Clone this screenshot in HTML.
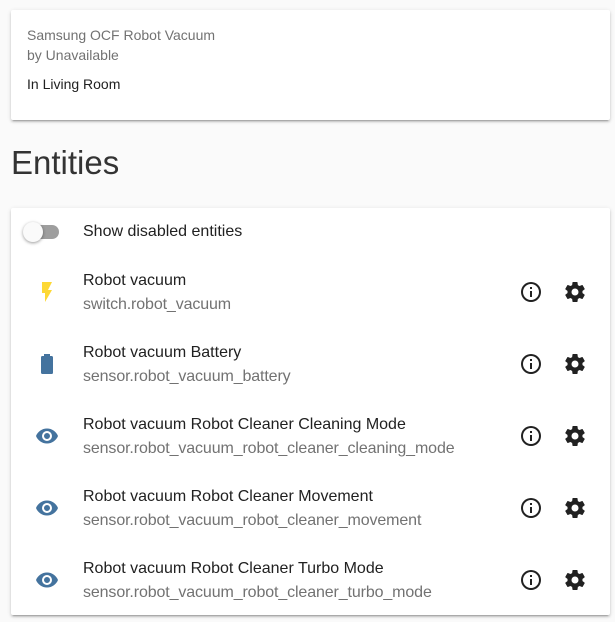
<!DOCTYPE html><html><head><style>
body{margin:0;background:#fafafa;font-family:"Liberation Sans",sans-serif;width:615px;height:622px;overflow:hidden;position:relative}
.card{position:absolute;left:11px;width:599px;background:#fff;border-radius:2px;box-shadow:0 2px 2px rgba(0,0,0,.14),0 1px 5px rgba(0,0,0,.12),0 3px 1px -2px rgba(0,0,0,.2)}
.t{position:absolute;white-space:nowrap}
.row{position:absolute;left:0;width:599px;height:72px}
.row .ic{position:absolute;left:24px;top:24px}
.row .n{position:absolute;left:72px;top:16px;font-size:16px;color:#212121}
.row .s{position:absolute;left:72px;top:40px;font-size:16px;color:#727272;letter-spacing:-0.12px}
.row .a{position:absolute;left:508px;top:24px}
.row .b{position:absolute;left:552px;top:24px}
</style></head><body>
<div class="card" style="top:10px;height:110px">
<div class="t" style="left:16px;top:17px;font-size:14px;color:#727272">Samsung OCF Robot Vacuum</div>
<div class="t" style="left:16px;top:37px;font-size:14px;color:#727272">by Unavailable</div>
<div class="t" style="left:16px;top:66px;font-size:14px;color:#212121">In Living Room</div>
</div>
<div class="t" style="left:11px;top:144px;font-size:33px;color:#333">Entities</div>
<div class="card" style="top:208px;height:407px">
<div style="position:absolute;left:14px;top:17px;width:34px;height:14px;border-radius:7px;background:#9e9e9e"></div>
<div style="position:absolute;left:12px;top:14px;width:20px;height:20px;border-radius:50%;background:#fafafa;box-shadow:0 1px 3px rgba(0,0,0,.4)"></div>
<div class="t" style="left:72px;top:15px;font-size:16px;color:#212121">Show disabled entities</div>
<div class="row" style="top:48px"><svg class="ic" width="24" height="24" viewBox="0 0 24 24"><path fill="#fdd835" d="M7,2V13H10V22L17,10H13L17,2H7Z"/></svg><div class="n">Robot vacuum</div><div class="s">switch.robot_vacuum</div>ACT</div>
<div class="row" style="top:120px"><svg class="ic" width="24" height="24" viewBox="0 0 24 24"><path fill="#44739e" d="M16.67,4H15V2H9V4H7.33A1.33,1.33 0 0,0 6,5.33V20.67C6,21.4 6.6,22 7.33,22H16.67A1.33,1.33 0 0,0 18,20.67V5.33C18,4.6 17.4,4 16.67,4Z"/></svg><div class="n">Robot vacuum Battery</div><div class="s">sensor.robot_vacuum_battery</div>ACT</div>
<div class="row" style="top:192px">EYE<div class="n">Robot vacuum Robot Cleaner Cleaning Mode</div><div class="s">sensor.robot_vacuum_robot_cleaner_cleaning_mode</div>ACT</div>
<div class="row" style="top:264px">EYE<div class="n">Robot vacuum Robot Cleaner Movement</div><div class="s">sensor.robot_vacuum_robot_cleaner_movement</div>ACT</div>
<div class="row" style="top:336px">EYE<div class="n">Robot vacuum Robot Cleaner Turbo Mode</div><div class="s">sensor.robot_vacuum_robot_cleaner_turbo_mode</div>ACT</div>
</div>
<script>
var eye='<svg class="ic" width="24" height="24" viewBox="0 0 24 24"><path fill="#44739e" d="M12,9A3,3 0 0,0 9,12A3,3 0 0,0 12,15A3,3 0 0,0 15,12A3,3 0 0,0 12,9M12,17A5,5 0 0,1 7,12A5,5 0 0,1 12,7A5,5 0 0,1 17,12A5,5 0 0,1 12,17M12,4.5C7,4.5 2.73,7.61 1,12C2.73,16.39 7,19.5 12,19.5C17,19.5 21.27,16.39 23,12C21.27,7.61 17,4.5 12,4.5Z"/></svg>';
var act='<svg class="a" width="24" height="24" viewBox="0 0 24 24"><path fill="#212121" d="M11,9H13V7H11M12,20C7.59,20 4,16.41 4,12C4,7.590 7.59,4 12,4C16.41,4 20,7.59 20,12C20,16.41 16.41,20 12,20M12,2A10,10 0 0,0 2,12A10,10 0 0,0 12,22A10,10 0 0,0 22,12A10,10 0 0,0 12,2M11,17H13V11H11V17Z"/></svg><svg class="b" width="24" height="24" viewBox="0 0 24 24"><path fill="#212121" d="M12,15.5A3.5,3.5 0 0,1 8.5,12A3.5,3.5 0 0,1 12,8.5A3.5,3.5 0 0,1 15.5,12A3.5,3.5 0 0,1 12,15.5M19.43,12.97C19.47,12.650 19.5,12.33 19.5,12C19.5,11.67 19.47,11.34 19.43,11L21.54,9.37C21.73,9.22 21.78,8.95 21.66,8.73L19.66,5.27C19.54,5.05 19.27,4.96 19.05,5.05L16.56,6.05C16.04,5.66 15.5,5.32 14.87,5.07L14.5,2.42C14.46,2.18 14.25,2 14,2H10C9.75,2 9.54,2.18 9.5,2.42L9.13,5.07C8.5,5.32 7.96,5.66 7.44,6.05L4.95,5.05C4.73,4.96 4.46,5.05 4.34,5.27L2.34,8.73C2.21,8.95 2.27,9.22 2.46,9.37L4.57,11C4.53,11.34 4.5,11.67 4.5,12C4.5,12.33 4.53,12.65 4.57,12.97L2.46,14.63C2.27,14.78 2.21,15.05 2.34,15.27L4.34,18.73C4.46,18.95 4.73,19.03 4.95,18.95L7.44,17.94C7.96,18.34 8.5,18.68 9.13,18.93L9.5,21.58C9.54,21.82 9.75,22 10,22H14C14.25,22 14.46,21.82 14.5,21.58L14.87,18.93C15.5,18.67 16.04,18.34 16.56,17.94L19.05,18.95C19.27,19.03 19.54,18.95 19.66,18.73L21.66,15.27C21.78,15.05 21.73,14.78 21.54,14.63L19.43,12.97Z"/></svg>';
document.querySelectorAll('.row').forEach(function(r){r.innerHTML=r.innerHTML.replace('EYE',eye).replace('ACT',act);});
</script>
</body></html>
